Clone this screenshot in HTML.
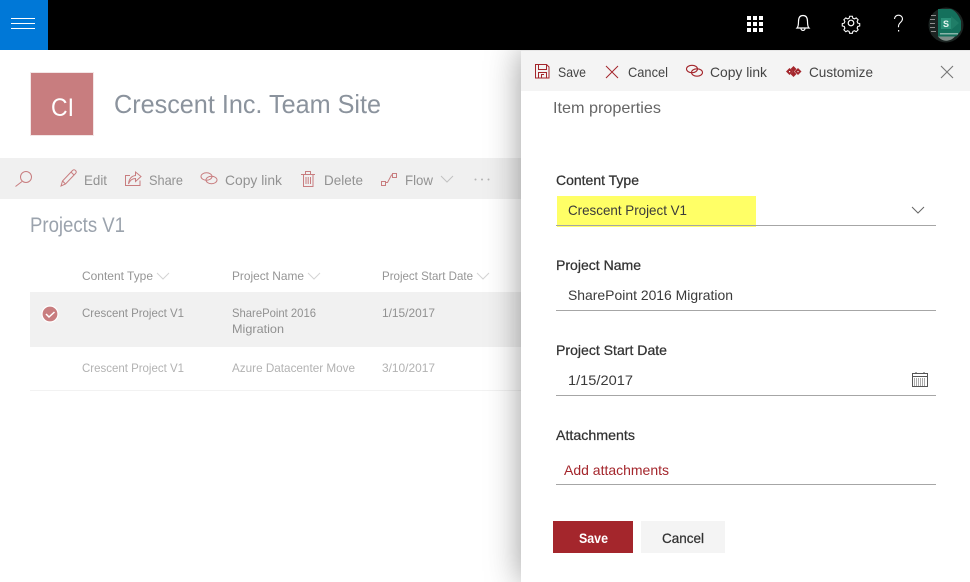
<!DOCTYPE html>
<html><head><meta charset="utf-8"><title>Crescent Inc. Team Site</title>
<style>
html,body{margin:0;padding:0;width:970px;height:582px;overflow:hidden;background:#fff}
svg{position:absolute;left:0;top:0;display:block}
text{font-family:"Liberation Sans",sans-serif;white-space:pre}
#panel{position:absolute;left:521px;top:50px;width:449px;height:532px;background:#fff;box-shadow:0 0 32px rgba(0,0,0,.4)}
.c{font-size:14px;fill:#929292}
.h{font-size:12px;fill:#959595}
.r{font-size:12px;fill:#919191}
.g{font-size:12px;fill:#b2b2b2}
.p{font-size:14px;fill:#444}
.l{font-size:14px;fill:#333;stroke:#333;stroke-width:.25px}
.v{font-size:14px;fill:#3a3a3a}
</style></head><body>
<svg width="970" height="582" viewBox="0 0 970 582">
<rect x="30.500" y="72.500" width="63" height="63" fill="#c87d7f" stroke="#f3e6e6"/>
<text x="51" y="116" font-size="25" fill="#fff" textLength="23" lengthAdjust="spacingAndGlyphs">CI</text>
<text x="114" y="113" font-size="26" fill="#8b939d" textLength="267" lengthAdjust="spacingAndGlyphs">Crescent Inc. Team Site</text>
<rect x="0" y="158" width="521" height="41" fill="#f0f0f0"/>
<g fill="none" stroke="#c87d7f" stroke-width="1">
<circle cx="26" cy="177" r="5.500"/><path d="M22 181.500L15.500 186.500"/>
<path d="M61 186l1.500-5 10-10.500c1-1 2-1 3 0s1 2 0 3L65.500 184zM62.500 181l3 3M71 172l3 3"/>
<path d="M130 175.500h-4.500v10h14.500v-5M128.500 184c.5-5 3-8 7-8.500v-3.500l5.500 4.500-5.500 5v-3c-3 0-5.500 1.500-7 5.500z"/>
<ellipse cx="206.500" cy="176.500" rx="5.500" ry="3.700"/><ellipse cx="211.500" cy="180" rx="5.500" ry="3.700"/>
<path d="M301 174.500h14M303.500 174.500v12h9.500v-12M305.500 174.500V171.500h5v3M306 177v7M308.200 177v7M310.500 177v7"/>
<rect x="381.500" y="181.500" width="4" height="4"/><rect x="392.500" y="173.500" width="4" height="4"/><path d="M385.500 182.500h2l4-7.500h1"/>
</g>
<path d="M441 176l6 6 6-6" fill="none" stroke="#c2c2c2"/>
<g fill="#b4b4b4"><circle cx="475.500" cy="179.500" r="1"/><circle cx="482" cy="179.500" r="1"/><circle cx="488.500" cy="179.500" r="1"/></g>
<text class="c" x="84" y="185" textLength="23" lengthAdjust="spacingAndGlyphs">Edit</text>
<text class="c" x="149" y="185" textLength="34" lengthAdjust="spacingAndGlyphs">Share</text>
<text class="c" x="225" y="185" textLength="57" lengthAdjust="spacingAndGlyphs">Copy link</text>
<text class="c" x="324" y="185" textLength="39" lengthAdjust="spacingAndGlyphs">Delete</text>
<text class="c" x="405" y="185" textLength="28" lengthAdjust="spacingAndGlyphs">Flow</text>
<text x="30" y="232" font-size="21" fill="#9ba3ad" textLength="95" lengthAdjust="spacingAndGlyphs">Projects V1</text>
<text class="h" x="82" y="280" textLength="71" lengthAdjust="spacingAndGlyphs">Content Type</text>
<text class="h" x="232" y="280" textLength="72" lengthAdjust="spacingAndGlyphs">Project Name</text>
<text class="h" x="382" y="280" textLength="91" lengthAdjust="spacingAndGlyphs">Project Start Date</text>
<g fill="none" stroke="#d4d4d4"><path d="M157 273l6 6 6-6M308 273l6 6 6-6M477 273l6 6 6-6"/></g>
<rect x="30" y="292" width="491" height="55" fill="#f1f1f1"/>
<circle cx="50" cy="314" r="8" fill="#c87d7f" stroke="#fff" stroke-width="1.200"/>
<path d="M46 314l3 3 5.500-5" fill="none" stroke="#fff" stroke-width="1.500"/>
<text class="r" x="82" y="317" textLength="102" lengthAdjust="spacingAndGlyphs">Crescent Project V1</text>
<text class="r" x="232" y="317" textLength="84" lengthAdjust="spacingAndGlyphs">SharePoint 2016</text>
<text class="r" x="232" y="333" textLength="52" lengthAdjust="spacingAndGlyphs">Migration</text>
<text class="r" x="382" y="317" textLength="53" lengthAdjust="spacingAndGlyphs">1/15/2017</text>
<text class="g" x="82" y="372" textLength="102" lengthAdjust="spacingAndGlyphs">Crescent Project V1</text>
<text class="g" x="232" y="372" textLength="123" lengthAdjust="spacingAndGlyphs">Azure Datacenter Move</text>
<text class="g" x="382" y="372" textLength="53" lengthAdjust="spacingAndGlyphs">3/10/2017</text>
<rect x="30" y="390" width="491" height="1" fill="#f2f2f2"/>
</svg>
<div id="panel"></div>
<svg width="970" height="582" viewBox="0 0 970 582">
<rect x="0" y="0" width="970" height="50" fill="#000"/>
<rect x="0" y="0" width="48" height="50" fill="#0078d7"/>
<g fill="#fff"><rect x="11" y="18" width="24" height="1"/><rect x="11" y="23" width="24" height="1"/><rect x="11" y="28" width="24" height="1"/></g>
<g fill="#fff">
<rect x="747" y="16" width="4" height="4"/><rect x="753" y="16" width="4" height="4"/><rect x="759" y="16" width="4" height="4"/>
<rect x="747" y="22" width="4" height="4"/><rect x="753" y="22" width="4" height="4"/><rect x="759" y="22" width="4" height="4"/>
<rect x="747" y="28" width="4" height="4"/><rect x="753" y="28" width="4" height="4"/><rect x="759" y="28" width="4" height="4"/>
</g>
<path d="M797 28h12c-1.500-1.500-1.500-4-1.500-6.500 0-4-1.500-6-4.500-6s-4.500 2-4.500 6c0 2.500 0 5-1.500 6.500zM801 28.500c0 2.500 4 2.500 4 0" fill="none" stroke="#fff" stroke-width="1.200"/>
<g fill="none" stroke="#fff" stroke-width="1.200"><circle cx="851" cy="23" r="2.800"/>
<path d="M849.500 15.500h3l.6 2.200 1.700.7 2-1.100 2.100 2.100-1.100 2 .7 1.700 2.200.6v2.600l-2.200.6-.7 1.700 1.100 2-2.100 2.100-2-1.100-1.700.7-.6 2.200h-3l-.6-2.200-1.700-.7-2 1.100-2.100-2.100 1.100-2-.7-1.700-2.200-.6v-2.600l2.200-.6.7-1.700-1.100-2 2.100-2.100 2 1.100 1.700-.7z" transform="translate(85.100 2.300) scale(.9)"/></g>
<path d="M894.500 19c0-2.500 2-3.800 4-3.800s4 1.300 4 3.600c0 3.600-4 3.600-4 7.500v1" fill="none" stroke="#fff" stroke-width="1.100"/><rect x="898" y="30" width="1.200" height="1.500" fill="#fff"/>
<circle cx="946" cy="25" r="17.500" fill="#1c2422"/>
<path d="M938 9h13c5 2 8 7 10 12v9c-1.500 2.500-3 5-5 6.500h-18z" fill="#14705c"/>
<path d="M938 36.500h17c-2 2.500-5 4-8.500 4.200-3.500.2-6.500-1.700-8.500-4.200z" fill="#7f8f8a"/>
<rect x="941" y="18" width="10" height="11" fill="#2a9078"/>
<text x="943" y="27" font-size="9" font-weight="700" fill="#e8f5f1">S</text>
<path d="M951 16l8 7-8 7z" fill="#1f7d67"/>
<rect x="940" y="33" width="18" height="1.500" fill="#b9d2cb" opacity=".7"/>
<g fill="#8f8f8f"><rect x="931" y="15" width="5" height="1"/><rect x="930" y="19" width="5" height="1"/><rect x="930" y="23" width="5" height="1"/><rect x="930" y="27" width="5" height="1"/><rect x="931" y="31" width="5" height="1"/></g>

<rect x="521" y="50" width="449" height="41" fill="#f4f4f4"/>
<rect x="521" y="50" width="449" height="1" fill="#e6e6e6"/>
<g fill="none" stroke="#a4262c" stroke-width="1">
<path d="M535.500 64.500h11l2.500 2.500v11h-13.500zM538.500 64.500v5h8v-5M538.500 78v-5.500h8V78M541.500 78v-3.500h2.500"/>
<path d="M606 66l12 12M618 66l-12 12"/>
<ellipse cx="692" cy="69" rx="5.500" ry="3.700" stroke-width="1.100"/><ellipse cx="697" cy="72.500" rx="5.500" ry="3.700" stroke-width="1.100"/>
</g>
<g fill="#a4262c">
<path d="M786 71.500l3.500-3.500 3.500 3.500-3.500 3.500z"/>
<path d="M794.500 71.500l3.500-3.500 3.500 3.500-3.500 3.500z"/>
<path d="M790.500 69l3-3 3 3-3 3zM790.500 74l3-3 3 3-3 3z"/>
</g>
<g fill="#f4f4f4"><rect x="789" y="71" width="1.200" height="1.200"/><rect x="797.400" y="71" width="1.200" height="1.200"/></g>
<text class="p" x="558" y="77" textLength="28" lengthAdjust="spacingAndGlyphs">Save</text>
<text class="p" x="628" y="77" textLength="40" lengthAdjust="spacingAndGlyphs">Cancel</text>
<text class="p" x="710" y="77" textLength="57" lengthAdjust="spacingAndGlyphs">Copy link</text>
<text class="p" x="809" y="77" textLength="64" lengthAdjust="spacingAndGlyphs">Customize</text>
<path d="M941 66l12 12M953 66l-12 12" fill="none" stroke="#777" stroke-width="1.100"/>
<text x="553" y="113" font-size="16" fill="#666" textLength="108" lengthAdjust="spacingAndGlyphs">Item properties</text>

<text class="l" x="556" y="185" textLength="83" lengthAdjust="spacingAndGlyphs">Content Type</text>
<rect x="557" y="196" width="199" height="31" fill="#ffff66"/>
<text class="v" x="568" y="215" textLength="119" lengthAdjust="spacingAndGlyphs">Crescent Project V1</text>
<rect x="556" y="225" width="380" height="1" fill="#a6a6a6"/>
<path d="M912 207l6 6 6-6" fill="none" stroke="#666"/>

<text class="l" x="556" y="270" textLength="85" lengthAdjust="spacingAndGlyphs">Project Name</text>
<text class="v" x="568" y="300" textLength="165" lengthAdjust="spacingAndGlyphs">SharePoint 2016 Migration</text>
<rect x="556" y="310" width="380" height="1" fill="#a6a6a6"/>

<text class="l" x="556" y="355" textLength="111" lengthAdjust="spacingAndGlyphs">Project Start Date</text>
<text class="v" x="568" y="385" textLength="65" lengthAdjust="spacingAndGlyphs">1/15/2017</text>
<rect x="556" y="395" width="380" height="1" fill="#a6a6a6"/>
<g fill="none" stroke="#555">
<rect x="912.500" y="373.500" width="15" height="13"/><path d="M912.500 376.500h15M916 372v2M924 372v2"/>
<path d="M914 379h12M914 381h12M914 383h12M914 385h12" stroke-dasharray="1 1"/>
</g>

<text class="l" x="556" y="440" textLength="79" lengthAdjust="spacingAndGlyphs">Attachments</text>
<text x="564" y="475" font-size="14" fill="#a4262c" textLength="105" lengthAdjust="spacingAndGlyphs">Add attachments</text>
<rect x="556" y="484" width="380" height="1" fill="#a6a6a6"/>

<rect x="553" y="521" width="80" height="32" fill="#a4262c"/>
<text x="579" y="543" font-size="14" font-weight="700" fill="#fff" textLength="29" lengthAdjust="spacingAndGlyphs">Save</text>
<rect x="641" y="521" width="84" height="32" fill="#f4f4f4"/>
<text class="l" x="662" y="543" textLength="42" lengthAdjust="spacingAndGlyphs">Cancel</text>
</svg>
</body></html>
